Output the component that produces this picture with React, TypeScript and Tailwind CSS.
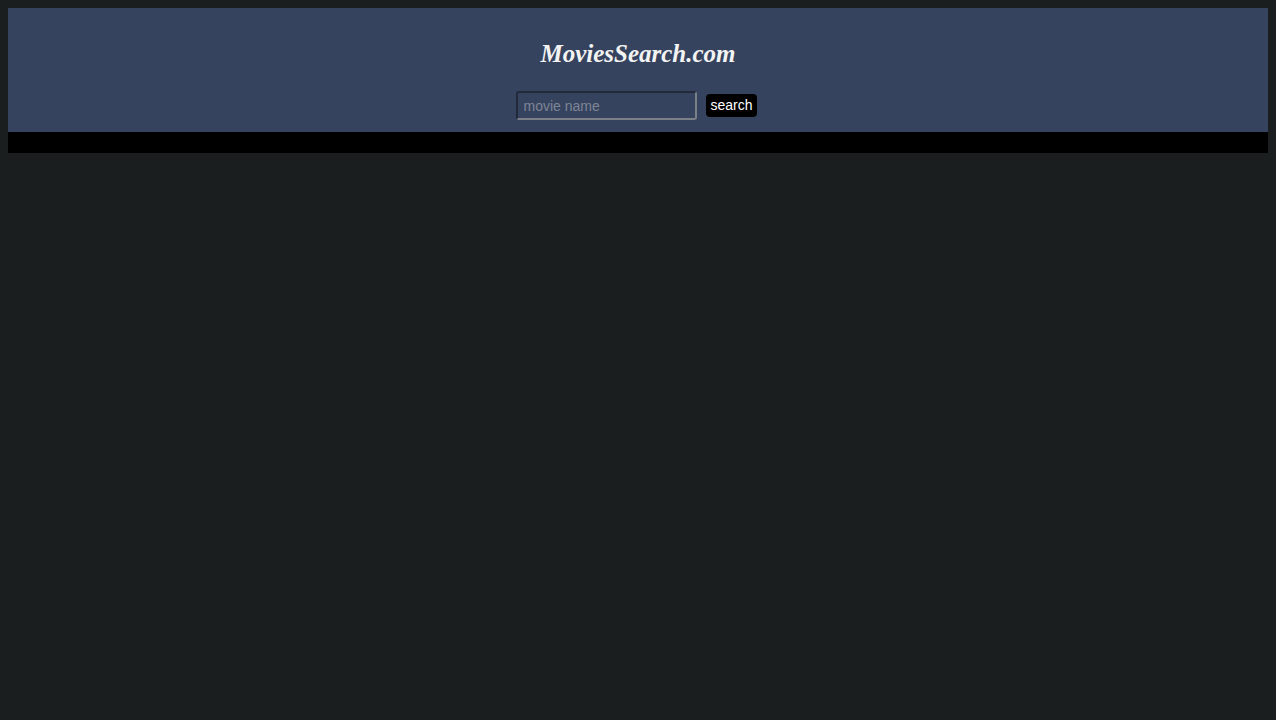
import React from "react";

const App: React.FC = () => {
  return (
    <div className="min-h-screen bg-[#1b1e1e] p-2" style={{ fontFamily: '"Liberation Sans", Arial, sans-serif' }}>
      <header className="bg-[#36435f] flex flex-col items-center pt-[30px] pb-[12px]">
        <h1
          className="text-[25px] font-bold italic text-[#f3f3f3] leading-[32px]"
          style={{ fontFamily: '"Liberation Serif", "Times New Roman", serif' }}
        >
          MoviesSearch.com
        </h1>
        <div className="flex items-center gap-[9px] mt-[21px] pr-[3px]">
          <input
            type="text"
            placeholder="movie name"
            className="w-[181px] h-[29px] rounded-[3px] bg-[#36435f] border-2 border-t-[#22293a] border-l-[#22293a] border-b-[#7a7f88] border-r-[#7a7f88] px-[5px] text-[14px] text-white placeholder:text-[#7e8595] outline-none"
          />
          <button className="h-[23px] px-[4px] rounded-[4px] bg-black text-white text-[14px] leading-[23px]">
            search
          </button>
        </div>
      </header>
      <div className="h-[21px] bg-black" />
    </div>
  );
};

export default App;
